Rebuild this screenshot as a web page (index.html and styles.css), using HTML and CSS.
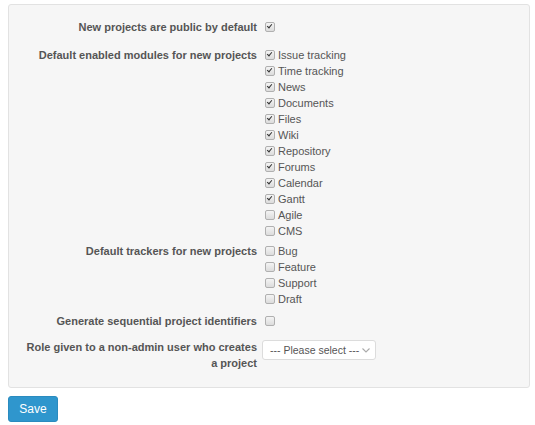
FILE: index.html
```html
<!DOCTYPE html>
<html>
    <head>
        <title>Settings - Projects</title>
        <link rel="stylesheet" href="styles.css">
    </head>
    <body>
        <form>
        <div class="box tabular">
            <div class="row row_first">
                <label class="caption">New projects are public by default</label>
                <div class="values">
                    <label class="opt"><input type="checkbox" checked></label>
                </div>
            </div>

            <div class="row row_modules">
                <label class="caption">Default enabled modules for new projects</label>
                <div class="values">
                    <label class="opt"><input type="checkbox" checked> Issue tracking</label>
                    <label class="opt"><input type="checkbox" checked> Time tracking</label>
                    <label class="opt"><input type="checkbox" checked> News</label>
                    <label class="opt"><input type="checkbox" checked> Documents</label>
                    <label class="opt"><input type="checkbox" checked> Files</label>
                    <label class="opt"><input type="checkbox" checked> Wiki</label>
                    <label class="opt"><input type="checkbox" checked> Repository</label>
                    <label class="opt"><input type="checkbox" checked> Forums</label>
                    <label class="opt"><input type="checkbox" checked> Calendar</label>
                    <label class="opt"><input type="checkbox" checked> Gantt</label>
                    <label class="opt"><input type="checkbox"> Agile</label>
                    <label class="opt"><input type="checkbox"> CMS</label>
                </div>
            </div>

            <div class="row row_trackers">
                <label class="caption">Default trackers for new projects</label>
                <div class="values">
                    <label class="opt"><input type="checkbox"> Bug</label>
                    <label class="opt"><input type="checkbox"> Feature</label>
                    <label class="opt"><input type="checkbox"> Support</label>
                    <label class="opt"><input type="checkbox"> Draft</label>
                </div>
            </div>

            <div class="row row_sequential">
                <label class="caption">Generate sequential project identifiers</label>
                <div class="values">
                    <label class="opt"><input type="checkbox"></label>
                </div>
            </div>

            <div class="row row_role">
                <label class="caption">Role given to a non-admin user who creates a project</label>
                <div class="values">
                    <div class="select">
                        <span>--- Please select ---</span>
                        <svg class="chevron" width="8" height="5" viewBox="0 0 8 5">
                            <path d="M0.5 0.5 L4 4 L7.5 0.5" fill="none" stroke="#aaa" stroke-width="1.1"/>
                        </svg>
                    </div>
                </div>
            </div>
        </div>

        <button type="button" class="btn_save">Save</button>
        </form>
    </body>
</html>
```

FILE: styles.css
```css
body {
    margin: 0;
    padding: 4px 5px 0 8px;
    font-family: "Liberation Sans", Arial, sans-serif;
    font-size: 11px;
    color: #555555;
}

.box {
    width: 520px;
    background: #f6f6f6;
    border: 1px solid #e2e2e2;
    border-radius: 3px;
    padding: 14px 0 16px 0;
}

.row {
    display: flex;
    line-height: 16px;
}

.row_modules {
    margin-top: 12px;
}

.row_trackers {
    margin-top: 4px;
}

.row_sequential {
    margin-top: 6px;
}

.row_role {
    margin-top: 10px;
}

.caption {
    width: 232px;
    padding-left: 16px;
    padding-right: 5px;
    text-align: right;
    font-weight: 700;
    color: #555555;
}

.values {
    display: flex;
    flex-direction: column;
}

.opt {
    display: flex;
    align-items: center;
    height: 16px;
    gap: 3px;
}

input[type=checkbox] {
    -webkit-appearance: none;
    appearance: none;
    margin: 0 0 0 3px;
    width: 10px;
    height: 10px;
    border: 1px solid #b0b0b0;
    border-radius: 2px;
    background: linear-gradient(#f4f4f4, #dcdcdc);
    position: relative;
    box-sizing: border-box;
}

input[type=checkbox]:checked::before {
    content: "";
    position: absolute;
    left: 2px;
    top: 0px;
    width: 2px;
    height: 4px;
    border-right: 1.5px solid #333333;
    border-bottom: 1.5px solid #333333;
    transform: rotate(40deg);
}

.select {
    margin-top: 1px;
    width: 114px;
    height: 20px;
    box-sizing: border-box;
    background: #ffffff;
    border: 1px solid #dcdcdc;
    border-radius: 3px;
    display: flex;
    align-items: center;
    justify-content: space-between;
    padding: 0 5px 0 7px;
    font-size: 10.5px;
    white-space: nowrap;
    color: #555555;
}

.chevron {
    display: block;
}

.btn_save {
    margin-top: 8px;
    width: 50px;
    height: 26px;
    background: #2f96cd;
    border: 1px solid #2a8bbf;
    border-radius: 3px;
    color: #ffffff;
    font-family: "Liberation Sans", Arial, sans-serif;
    font-size: 12px;
    padding: 0;
}
```
